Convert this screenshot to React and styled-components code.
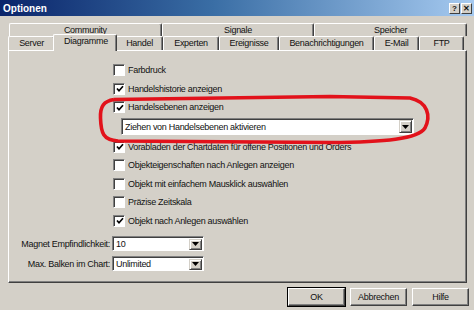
import styled, { createGlobalStyle } from 'styled-components'

const Global = createGlobalStyle`
  html, body { margin: 0; padding: 0; }
  body { background: #d4d0c8; font-family: "Liberation Sans", Arial, sans-serif; font-size: 9px; letter-spacing: -0.3px; color: #111; }
`

const topTabs = ['Community', 'Signale', 'Speicher']
const frontTabs = [
  { label: 'Server', w: 47 },
  { label: 'Diagramme', w: 64, active: true },
  { label: 'Handel', w: 47 },
  { label: 'Experten', w: 56 },
  { label: 'Ereignisse', w: 60 },
  { label: 'Benachrichtigungen', w: 95 },
  { label: 'E-Mail', w: 45 },
  { label: 'FTP', w: 45 },
]

const options = [
  { label: 'Farbdruck', checked: false },
  { label: 'Handelshistorie anzeigen', checked: true },
  { label: 'Handelsebenen anzeigen', checked: true, combo: 'Ziehen von Handelsebenen aktivieren' },
  { label: 'Vorabladen der Chartdaten für offene Positionen und Orders', checked: true },
  { label: 'Objekteigenschaften nach Anlegen anzeigen', checked: false },
  { label: 'Objekt mit einfachem Mausklick auswählen', checked: false },
  { label: 'Präzise Zeitskala', checked: false },
  { label: 'Objekt nach Anlegen auswählen', checked: true },
]

function Arrow() {
  return (
    <svg width="7" height="4" viewBox="0 0 7 4">
      <path d="M0 0 H7 L3.5 4 Z" fill="#000" />
    </svg>
  )
}

function Combo({ value, width, height = 17 }) {
  return (
    <ComboBox $w={width} $h={height}>
      <ComboText>{value}</ComboText>
      <ComboButton $h={height - 4}><Arrow /></ComboButton>
    </ComboBox>
  )
}

function CheckBox({ checked }) {
  return (
    <Box>
      {checked && (
        <svg width="8" height="8" viewBox="0 0 8 8">
          <path d="M1 3.5 L3 5.7 L7 1.3" stroke="#000" strokeWidth="1.7" fill="none" />
        </svg>
      )}
    </Box>
  )
}

export default function App() {
  return (
    <Window>
      <Global />
      <TitleBar>
        <Title>Optionen</Title>
        <TitleButtons>
          <CapButton>?</CapButton>
          <CapButton>✕</CapButton>
        </TitleButtons>
      </TitleBar>

      <Body>
        <Tabs>
          <BackRow>
            {topTabs.map(t => <BackTab key={t}>{t}</BackTab>)}
          </BackRow>
          <FrontRow>
            {frontTabs.map(t => (
              <FrontTab key={t.label} $w={t.w} $active={t.active}>{t.label}</FrontTab>
            ))}
          </FrontRow>
        </Tabs>

        <Panel>
          <Options>
            {options.map(o => (
              <OptionGroup key={o.label}>
                <Option>
                  <CheckBox checked={o.checked} />
                  <span>{o.label}</span>
                </Option>
                {o.combo && (
                  <ComboWrap>
                    <Combo value={o.combo} width={293} />
                  </ComboWrap>
                )}
              </OptionGroup>
            ))}
          </Options>

          <Fields>
            <FieldLabel>Magnet Empfindlichkeit:</FieldLabel>
            <Combo value="10" width={92} height={15} />
            <FieldLabel>Max. Balken im Chart:</FieldLabel>
            <Combo value="Unlimited" width={92} height={15} />
          </Fields>

          <Highlight width="474" height="310" viewBox="0 0 474 310">
            <path
              d="M114 99.5 C104 101 100 106 100.5 118 C101 133 103 140 118 141 L330 142.5 C385 142 418 139 425 128 C431 116 428 102 410 98 L330 96.5 L114 99.5"
              fill="none"
              stroke="#e2121b"
              strokeWidth="3.6"
              strokeLinejoin="round"
            />
          </Highlight>
        </Panel>

        <Buttons>
          <Button $default>OK</Button>
          <Button>Abbrechen</Button>
          <Button>Hilfe</Button>
        </Buttons>
      </Body>
    </Window>
  )
}

const Window = styled.div`
  width: 474px;
  height: 310px;
  background: #d4d0c8;
  position: relative;
  overflow: hidden;
`

const TitleBar = styled.div`
  height: 16px;
  display: flex;
  align-items: center;
  justify-content: space-between;
  padding: 0 2px 0 3px;
  background: linear-gradient(to right, #0a246a, #3a6ea5 45%, #a6caf0);
`

const Title = styled.div`
  color: #fff;
  font-weight: bold;
  font-size: 10px;
  letter-spacing: 0;
`

const TitleButtons = styled.div`
  display: flex;
  gap: 1px;
`

const CapButton = styled.div`
  width: 11px;
  height: 11px;
  background: #d4d0c8;
  border: 1px solid;
  border-color: #fff #404040 #404040 #fff;
  box-sizing: border-box;
  font-size: 8px;
  font-weight: bold;
  line-height: 9px;
  text-align: center;
  letter-spacing: 0;
`

const Body = styled.div`
  padding: 7px 5px 0 8px;
`

const Tabs = styled.div`
  width: 459px;
`

const BackRow = styled.div`
  display: flex;
  height: 13px;
  padding-left: 1px;
`

const BackTab = styled.div`
  flex: 1;
  text-align: center;
  line-height: 13px;
  border-top: 1px solid #fff;
  border-left: 1px solid #fff;
  border-right: 1px solid #404040;
  box-shadow: inset -1px 0 0 #808080;
  border-radius: 2px 2px 0 0;
`

const FrontRow = styled.div`
  display: flex;
  height: 14px;
  align-items: flex-end;
`

const FrontTab = styled.div`
  width: ${p => p.$w}px;
  height: ${p => (p.$active ? 17 : 14)}px;
  box-sizing: border-box;
  text-align: center;
  line-height: ${p => (p.$active ? 12 : 13)}px;
  border-top: 1px solid #fff;
  border-left: 1px solid #fff;
  border-right: 1px solid #404040;
  box-shadow: inset -1px 0 0 #808080;
  border-radius: 2px 2px 0 0;
  background: #d4d0c8;
  position: relative;
  z-index: ${p => (p.$active ? 2 : 1)};
  margin: ${p => (p.$active ? '0 -1px -1px -2px' : '0')};
  padding-left: ${p => (p.$active ? 2 : 0)}px;
`

const Panel = styled.div`
  width: 459px;
  height: 233px;
  box-sizing: border-box;
  border: 1px solid;
  border-color: #fff #404040 #404040 #fff;
  box-shadow: inset -1px -1px 0 #808080;
  padding: 13px 0 0 104px;
  position: relative;
`

const Options = styled.div`
  display: flex;
  flex-direction: column;
  gap: 6px;
`

const OptionGroup = styled.div`
  display: flex;
  flex-direction: column;
  gap: 4px;
`

const Option = styled.div`
  display: flex;
  align-items: center;
  gap: 3px;
  height: 12.5px;
`

const Box = styled.div`
  width: 12px;
  height: 12px;
  box-sizing: border-box;
  background: #fff;
  border: 1px solid;
  border-color: #808080 #fff #fff #808080;
  box-shadow: inset 1px 1px 0 #404040;
  display: flex;
  align-items: center;
  justify-content: center;
  padding: 1px 0 0 1px;
`

const ComboWrap = styled.div`
  padding-left: 8px;
`

const ComboBox = styled.div`
  width: ${p => p.$w}px;
  height: ${p => p.$h}px;
  box-sizing: border-box;
  background: #fff;
  border: 1px solid;
  border-color: #808080 #fff #fff #808080;
  box-shadow: inset 1px 1px 0 #404040;
  display: flex;
  align-items: center;
  padding: 1px 1px 0 2px;
`

const ComboText = styled.div`
  flex: 1;
  padding-left: 1px;
`

const ComboButton = styled.div`
  width: 13px;
  height: ${p => p.$h}px;
  box-sizing: border-box;
  background: #d4d0c8;
  border: 1px solid;
  border-color: #d4d0c8 #404040 #404040 #d4d0c8;
  box-shadow: inset 1px 1px 0 #fff, inset -1px -1px 0 #808080;
  display: flex;
  align-items: center;
  justify-content: center;
`

const Fields = styled.div`
  display: grid;
  grid-template-columns: 95px auto;
  justify-content: start;
  align-items: center;
  row-gap: 5px;
  column-gap: 2px;
  margin: 9px 0 0 -98px;
`

const FieldLabel = styled.div`
  text-align: right;
`

const Highlight = styled.svg`
  position: absolute;
  left: -9px;
  top: -51px;
  pointer-events: none;
`

const Buttons = styled.div`
  display: flex;
  justify-content: flex-end;
  gap: 5px;
  padding: 5px 0 0 0;
  width: 461px;
`

const Button = styled.div`
  width: 57px;
  height: 18px;
  box-sizing: border-box;
  line-height: 16px;
  text-align: center;
  border: 1px solid;
  border-color: #fff #404040 #404040 #fff;
  box-shadow: inset -1px -1px 0 #808080;
  outline: ${p => (p.$default ? '1px solid #000' : 'none')};
`
